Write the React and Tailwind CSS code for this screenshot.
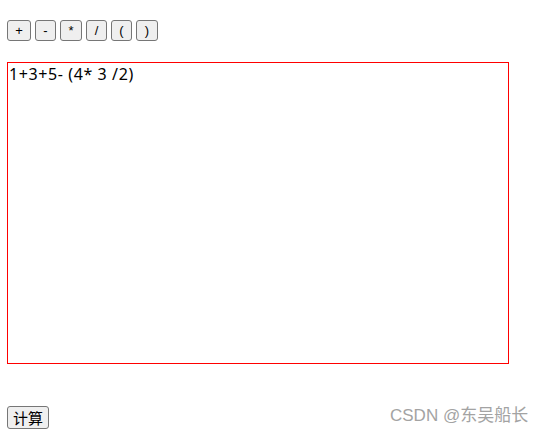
import { useState } from 'react';

const ops = [
  { label: '+', w: 'w-[24px]' },
  { label: '-', w: 'w-[21px]' },
  { label: '*', w: 'w-[22px]' },
  { label: '/', w: 'w-[21px]' },
  { label: '(', w: 'w-[21px]' },
  { label: ')', w: 'w-[22px]' },
];

const btn = 'h-[21px] border border-[#767676] rounded-[3px] bg-[#efefef] text-[13px] leading-none text-black flex items-center justify-center font-["Liberation_Sans",sans-serif]';

export default function App() {
  const [expr, setExpr] = useState('1+3+5- (4* 3 /2)');

  return (
    <div className="relative w-[542px] h-[437px] bg-white font-['Noto_Sans','Noto_Sans_CJK_SC',sans-serif]">
      <div className="pl-[7px] pt-[20px] flex gap-[4px]">
        {ops.map(o => (
          <button key={o.label} onClick={() => setExpr(e => e + o.label)} className={`${btn} ${o.w}`}>
            {o.label}
          </button>
        ))}
      </div>

      <textarea
        value={expr}
        onChange={e => setExpr(e.target.value)}
        className="block ml-[7px] mt-[21px] w-[502px] h-[302px] border border-[#ff0000] outline-none resize-none p-0 pl-[1px] text-[16px] leading-[22px] tracking-[0.6px] text-black font-['Noto_Sans','Noto_Sans_CJK_SC',sans-serif]"
      />

      <button className="ml-[7px] mt-[42px] w-[42px] h-[23px] border border-[#767676] rounded-[3px] bg-[#efefef] text-[15px] leading-none text-black flex items-center justify-center font-['Noto_Sans_CJK_SC',sans-serif]">
        计算
      </button>

      <span className="absolute left-[390px] top-[405px] text-[17px] leading-[22px] text-[#a3a3a3] font-['Liberation_Sans','Noto_Sans_CJK_SC',sans-serif]">
        CSDN @东吴船长
      </span>
    </div>
  );
}
